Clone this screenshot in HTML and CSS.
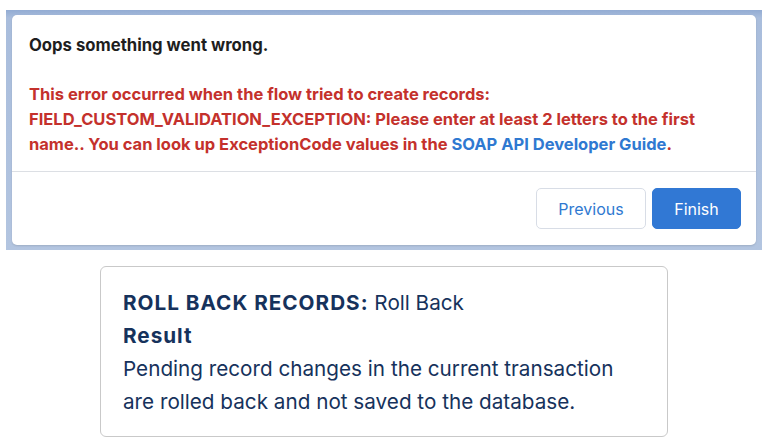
FILE: index.html
```html
<!DOCTYPE html>
<html lang="en">
<head>
<meta charset="utf-8">
<title>Flow error</title>
<link rel="stylesheet" href="styles.css">
</head>
<body>
<div class="frame">
  <div class="modal">
    <div class="modal-body">
      <p class="title">Oops something went wrong.</p>
      <p class="error">This error occurred when the flow tried to create records:<br>FIELD_CUSTOM_VALIDATION_EXCEPTION: Please enter at least 2 letters to the first<br>name.. You can look up ExceptionCode values in the <a href="#" class="link">SOAP API Developer Guide</a>.</p>
    </div>
    <div class="modal-footer">
      <button class="btn btn-neutral">Previous</button>
      <button class="btn btn-brand">Finish</button>
    </div>
  </div>
</div>
<div class="note-wrap">
  <div class="note">
    <p class="note-line"><strong>ROLL BACK RECORDS:</strong> Roll Back</p>
    <p class="note-line"><strong>Result</strong></p>
    <p class="note-line">Pending record changes in the current transaction<br>are rolled back and not saved to the database.</p>
  </div>
</div>
</body>
</html>
```

FILE: styles.css
```css
* { box-sizing: border-box; }
html, body { margin: 0; padding: 0; background: #ffffff; }
body { width: 768px; height: 444px; overflow: hidden; font-family: Inter, "Liberation Sans", Arial, sans-serif; }

.frame {
  margin: 10px 6px 0 6px;
  height: 240px;
  padding: 5px 6px 5px 6px;
  background: linear-gradient(180deg, #93acd3 0px, #a9bddc 8px, #b3c5e0 100%);
}
.modal {
  background: #fff;
  border-radius: 5px;
  height: 230px;
  display: flex;
  flex-direction: column;
  box-shadow: 0 1px 2px rgba(0,0,0,0.12);
}
.modal-body {
  padding: 20px 17px 0 17px;
  height: 157px;
  border-bottom: 1px solid #dcdfe4;
}
.title {
  margin: 0;
  font-size: 16.7px;
  line-height: 20px;
  font-weight: 700;
  color: #1e1e1e;
}
.error {
  margin: 27px 0 0 0;
  font-size: 16.5px;
  line-height: 25px;
  font-weight: 700;
  color: #c4312c;
}
.link { color: #2f79d1; text-decoration: none; }

.modal-footer {
  display: flex;
  justify-content: flex-end;
  gap: 6px;
  padding: 16px 15px 0 0;
}
.btn {
  font-family: Inter, "Liberation Sans", Arial, sans-serif;
  font-size: 16px;
  height: 41px;
  border-radius: 5px;
  padding: 0;
  cursor: pointer;
}
.btn-neutral {
  width: 110px;
  background: #fff;
  border: 1px solid #d8dde6;
  color: #2f79d1;
}
.btn-brand {
  width: 89px;
  background: #3178d4;
  border: 1px solid #3178d4;
  color: #fff;
}

.note-wrap {
  display: flex;
  padding: 16px 0 0 100px;
}
.note {
  width: 568px;
  height: 171px;
  border: 1px solid #c9c9c9;
  border-radius: 6px;
  padding: 19px 20px 0 22px;
  font-family: Inter, "Liberation Sans", sans-serif;
  font-size: 20.7px;
  line-height: 33px;
  color: #16325c;
}
.note-line { margin: 0; }
.note-line strong { font-weight: 700; letter-spacing: 1px; }
```
